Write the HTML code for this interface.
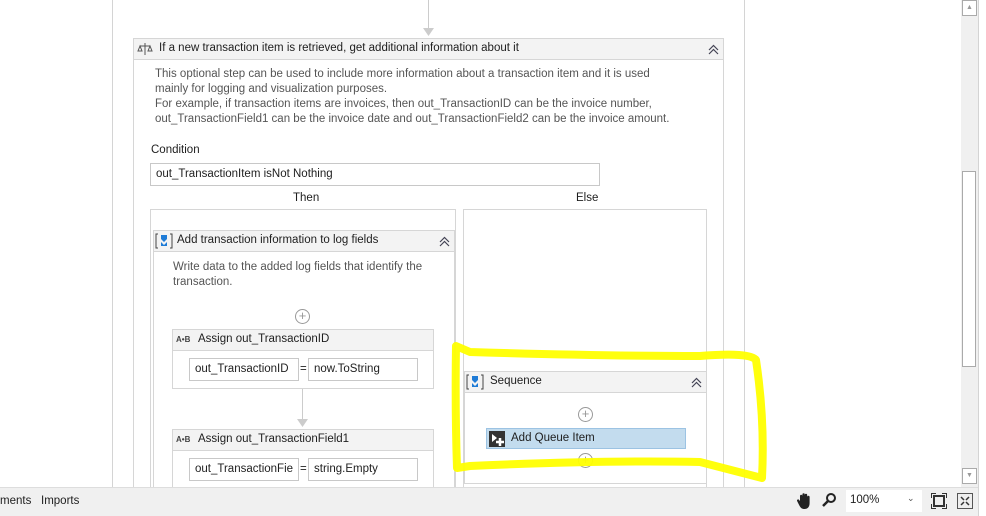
<!DOCTYPE html>
<html><head><style>
*{margin:0;padding:0;box-sizing:border-box}
body{width:986px;height:516px;position:relative;overflow:hidden;background:#fff;font-family:"Liberation Sans",sans-serif;font-size:11.5px;color:#1e1e1e}
.a{position:absolute}
.box{position:absolute;border:1px solid #d6d6d6;background:#fff}
.hdr{position:absolute;left:0;right:0;top:0;height:21px;background:#f3f3f3;border-bottom:1px solid #d6d6d6}
.inp{position:absolute;border:1px solid #c8c8c8;background:#fff;padding:4px 5px;height:23px;white-space:nowrap;overflow:hidden}
.g{color:#555}
.chev{position:absolute;right:4px;top:5px}
.plus{position:absolute;width:15px;height:15px;border:1px solid #999;border-radius:50%;color:#999;font-size:13px;line-height:12px;text-align:center}
</style></head><body>
<div class="a" style="left:112px;top:0;width:1px;height:487px;background:#d4d4d4"></div>
<div class="a" style="left:744px;top:0;width:1px;height:487px;background:#d4d4d4"></div>
<div class="a" style="left:428px;top:0;width:1px;height:30px;background:#ccc"></div>
<svg class="a" style="left:423px;top:28px" width="11" height="8"><path d="M0 0H11L5.5 8Z" fill="#ccc"/></svg>

<div class="box" style="left:133px;top:38px;width:591px;height:460px">
 <div class="hdr"><svg class="a" style="left:3px;top:3px" width="16" height="15"><path d="M8 1v12M3 4h10M3 4l-2 5h4zM13 4l-2 5h4z" stroke="#555" fill="none"/></svg>
 <span class="a" style="left:25px;top:3px">If a new transaction item is retrieved, get additional information about it</span><svg class="chev" width="11" height="11"><path d="M1 6l4.5-4.5L10 6M1 10l4.5-4.5L10 10" stroke="#445" stroke-width="1.2" fill="none"/></svg></div>
 <div class="a g" style="left:21px;top:28px;line-height:15px;width:560px">This optional step can be used to include more information about a transaction item and it is used<br>mainly for logging and visualization purposes.<br>For example, if transaction items are invoices, then out_TransactionID can be the invoice number,<br>out_TransactionField1 can be the invoice date and out_TransactionField2 can be the invoice amount.</div>
 <div class="a" style="left:17px;top:105px">Condition</div>
 <div class="inp" style="left:16px;top:124px;width:450px">out_TransactionItem isNot Nothing</div>
 <div class="a" style="left:159px;top:153px">Then</div>
 <div class="a" style="left:442px;top:153px">Else</div>
</div>

<div class="box" style="left:150px;top:209px;width:306px;height:290px"></div>
<div class="box" style="left:463px;top:209px;width:244px;height:290px"></div>

<div class="box" style="left:153px;top:230px;width:302px;height:270px">
 <div class="hdr"><svg class="a" style="left:1px;top:2px" width="18" height="16"><path d="M3 1H1V15H3M15 1H17V15H15" stroke="#444" fill="none"/><path d="M6 2h6v4l-3 3-3-3z M6 9l3 3 3-3v4H6z" fill="#1e7bd6"/></svg>
 <span class="a" style="left:23px;top:3px">Add transaction information to log fields</span><svg class="chev" width="11" height="11"><path d="M1 6l4.5-4.5L10 6M1 10l4.5-4.5L10 10" stroke="#445" stroke-width="1.2" fill="none"/></svg></div>
 <div class="a g" style="left:19px;top:29px;line-height:15px">Write data to the added log fields that identify the<br>transaction.</div>
 <div class="plus" style="left:141px;top:78px">+</div>
</div>

<div class="box" style="left:172px;top:329px;width:262px;height:60px">
 <div class="hdr"><span class="a" style="left:3px;top:5px;font-size:8px;font-weight:bold;color:#444">A•B</span><span class="a" style="left:25px;top:3px">Assign out_TransactionID</span></div>
 <div class="inp" style="left:16px;top:28px;width:110px">out_TransactionID</div>
 <div class="a" style="left:127px;top:33px">=</div>
 <div class="inp" style="left:135px;top:28px;width:110px">now.ToString</div>
</div>
<div class="a" style="left:302px;top:389px;width:1px;height:32px;background:#ccc"></div>
<svg class="a" style="left:297px;top:419px" width="11" height="8"><path d="M0 0H11L5.5 8Z" fill="#ccc"/></svg>
<div class="box" style="left:172px;top:429px;width:262px;height:70px">
 <div class="hdr"><span class="a" style="left:3px;top:5px;font-size:8px;font-weight:bold;color:#444">A•B</span><span class="a" style="left:25px;top:3px">Assign out_TransactionField1</span></div>
 <div class="inp" style="left:16px;top:28px;width:110px">out_TransactionFie</div>
 <div class="a" style="left:127px;top:33px">=</div>
 <div class="inp" style="left:135px;top:28px;width:110px">string.Empty</div>
</div>

<div class="box" style="left:464px;top:371px;width:243px;height:113px">
 <div class="hdr"><svg class="a" style="left:1px;top:2px" width="18" height="16"><path d="M3 1H1V15H3M15 1H17V15H15" stroke="#444" fill="none"/><path d="M6 2h6v4l-3 3-3-3z M6 9l3 3 3-3v4H6z" fill="#1e7bd6"/></svg>
 <span class="a" style="left:25px;top:3px">Sequence</span><svg class="chev" width="11" height="11"><path d="M1 6l4.5-4.5L10 6M1 10l4.5-4.5L10 10" stroke="#445" stroke-width="1.2" fill="none"/></svg></div>
 <div class="plus" style="left:113px;top:35px">+</div>
 <div class="a" style="left:21px;top:56px;width:200px;height:21px;background:#c3dcee;border:1px solid #9cc3e3"><svg class="a" style="left:2px;top:2px" width="16" height="16"><rect width="16" height="16" fill="#333"/><path d="M3 3l5 4-5 4z" fill="#fff"/><path d="M11 7v8M7 11h8" stroke="#fff" stroke-width="2.5"/></svg><span class="a" style="left:24px;top:3px">Add Queue Item</span></div>
 <div class="plus" style="left:113px;top:81px">+</div>
</div>

<svg class="a" style="left:0;top:0" width="986" height="516"><path d="M456 346 Q455 410 457 468 L470 466 Q600 460 700 462 L762 478 Q765 420 756 360 Q750 352 700 356 Q600 356 470 352 Z" fill="none" stroke="#ffff00" stroke-width="8" stroke-linejoin="round" opacity="0.95"/></svg>

<div class="a" style="left:961px;top:0;width:17px;height:487px;background:#f0f0f0"></div>
<div class="a" style="left:978px;top:0;width:1px;height:516px;background:#d4d4d4"></div>
<div class="a" style="left:962px;top:0;width:15px;height:16px;border:1px solid #aaa;background:#fff;font-size:7px;color:#999;text-align:center;line-height:14px">▲</div>
<div class="a" style="left:962px;top:171px;width:14px;height:196px;border:1px solid #aaa;background:#fff"></div>
<div class="a" style="left:962px;top:468px;width:15px;height:16px;border:1px solid #aaa;background:#fff;font-size:7px;color:#999;text-align:center;line-height:14px">▼</div>

<div class="a" style="left:0;top:487px;width:978px;height:29px;background:#f0f0f0;border-top:1px solid #ddd">
 <span class="a" style="left:0;top:7px">ments</span><span class="a" style="left:41px;top:7px">Imports</span>
 <svg class="a" style="left:796px;top:4px" width="18" height="18"><path d="M4 9V4a1.2 1.2 0 0 1 2.4 0v4V2.5a1.2 1.2 0 0 1 2.4 0V8V3a1.2 1.2 0 0 1 2.4 0v5.5V5a1.2 1.2 0 0 1 2.4 0v6c0 4-2 6-5 6s-4-1-6-5l-1.5-3a1.1 1.1 0 0 1 2-1z" fill="#222"/></svg>
 <svg class="a" style="left:822px;top:5px" width="14" height="14"><circle cx="9" cy="5" r="4" stroke="#222" stroke-width="2" fill="none"/><path d="M6 8L1 13" stroke="#222" stroke-width="2.5"/></svg>
 <div class="a" style="left:846px;top:2px;width:76px;height:22px;background:#fff"><span class="a" style="left:4px;top:4px">100%</span><span class="a" style="left:61px;top:3px;font-size:9px;color:#555">⌄</span></div>
 <svg class="a" style="left:931px;top:5px" width="16" height="16"><rect x="3" y="3" width="10" height="10" stroke="#333" fill="none" stroke-width="2"/><path d="M0 0h5M0 0v5M16 0h-5M16 0v5M0 16h5M0 16v-5M16 16h-5M16 16v-5" stroke="#333" stroke-width="2"/></svg>
 <svg class="a" style="left:957px;top:5px" width="16" height="16"><rect x="0.5" y="0.5" width="15" height="15" stroke="#555" fill="#eee"/><path d="M4 4l3 3M12 4l-3 3M4 12l3-3M12 12l-3-3" stroke="#333" stroke-width="1.5"/></svg>
</div>
</body></html>
